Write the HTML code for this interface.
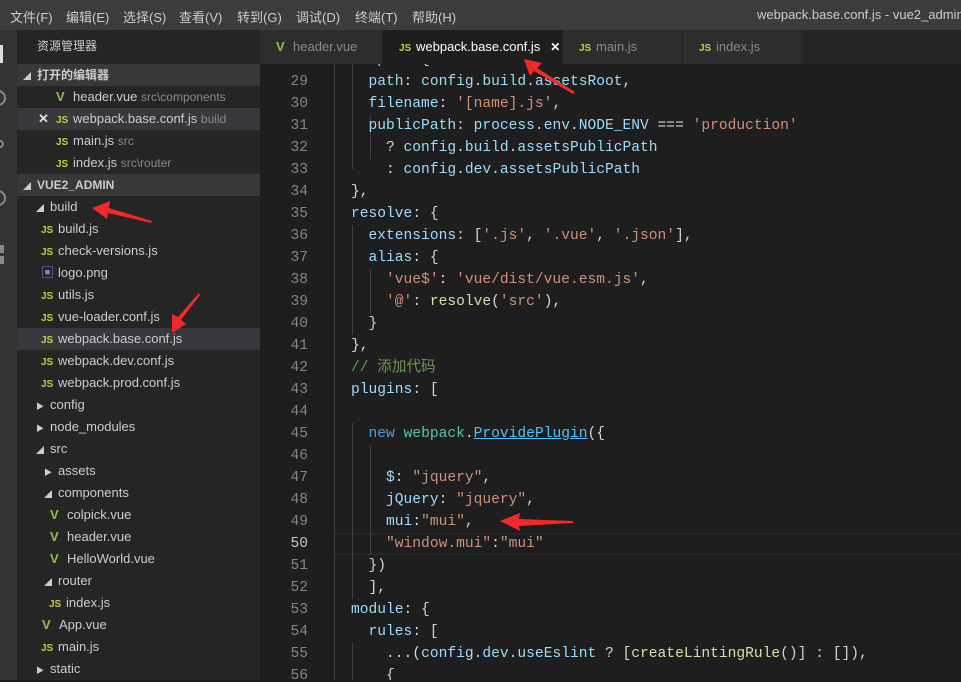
<!DOCTYPE html>
<html><head><meta charset="utf-8"><style>
*{margin:0;padding:0;box-sizing:border-box}
body{width:961px;height:680px;background:#1e1e1e;overflow:hidden;position:relative;font-family:"Liberation Sans","Noto Sans CJK SC",sans-serif;color:#ccc}
#title{position:absolute;left:0;top:0;width:961px;height:30px;background:#3c3c3c;font-size:13px;color:#ccc;overflow:hidden}
#title span{position:absolute;top:7px;white-space:nowrap}
#act{position:absolute;left:0;top:30px;width:17px;height:650px;background:#333;overflow:hidden}
#side{position:absolute;left:17px;top:30px;width:243px;height:650px;background:#252526;font-size:13px}
.row{position:absolute;left:0;width:243px;height:22px;line-height:22px;white-space:nowrap}
.sec{background:#383838;font-weight:bold;font-size:12px;color:#ccc}
.sel{background:#37373d}
.js{color:#cbcb41;font-weight:bold;font-size:10px;display:inline-block;width:17px}
.vue{color:#8dc149;display:inline-block;width:17px;font-size:13px;font-weight:bold}
.dim{color:#8a8a8a;font-size:12px}
.tri{display:inline-block;width:14px;font-size:8px;color:#ccc}
#tabs{position:absolute;left:260px;top:30px;width:701px;height:34px;background:#252526}
.tab{position:absolute;top:0;height:34px;line-height:34px;font-size:13px;color:#8a8a8a;background:#2d2d2d;border-right:1px solid #252526;padding-left:16px;white-space:nowrap}
#ed{position:absolute;left:260px;top:64px;width:701px;height:616px;overflow:hidden}
#code{position:absolute;left:0;top:-15px;width:701px;font-family:"Liberation Mono","Noto Sans CJK SC",monospace;font-size:14.6px}
.l{position:absolute;left:0;height:22px;line-height:22px;width:701px;white-space:pre;color:#d4d4d4}
.n{position:absolute;left:0;width:48px;text-align:right;color:#858585}
.c{position:absolute;left:91px}
.k{color:#9cdcfe}.s{color:#ce9178}.b{color:#569cd6}.t{color:#4ec9b0}.f{color:#dcdcaa}.g{color:#6a9955}.u{color:#4fc1ff;text-decoration:underline}
.guide{position:absolute;width:1px;background:#404040}
</style></head><body>
<div id="title">
<span style="left:10px">文件(F)</span><span style="left:66px">编辑(E)</span><span style="left:123px">选择(S)</span><span style="left:179px">查看(V)</span><span style="left:237px">转到(G)</span><span style="left:296px">调试(D)</span><span style="left:355px">终端(T)</span><span style="left:412px">帮助(H)</span>
<span style="left:757px">webpack.base.conf.js - vue2_admin - V</span>
</div>
<div id="act">
<div style="position:absolute;left:0;top:15px;width:3px;height:18px;background:#ddd"></div>
<div style="position:absolute;left:-10px;top:60px;width:16px;height:16px;border:2px solid #888;border-radius:50%"></div>
<div style="position:absolute;left:-4px;top:110px;width:8px;height:8px;border:2px solid #888;border-radius:50%"></div>
<div style="position:absolute;left:-10px;top:160px;width:16px;height:16px;border:2px solid #888;border-radius:50%"></div>
<div style="position:absolute;left:0;top:215px;width:4px;height:8px;background:#888"></div>
<div style="position:absolute;left:0;top:226px;width:4px;height:8px;background:#888"></div>
</div>
<div id="side">
<div class="row" style="top:5px;padding-left:20px;font-size:12px">资源管理器</div>
<div class="row sec" style="top:34px;padding-left:6px"><span class="tri">◢</span>打开的编辑器</div>
<div class="row" style="top:56px;padding-left:39px"><span class="vue">V</span>header.vue <span class="dim">src\components</span></div>
<div class="row sel" style="top:78px;padding-left:21px"><span style="display:inline-block;width:18px;color:#ddd;font-weight:bold">✕</span><span class="js">JS</span>webpack.base.conf.js <span class="dim">build</span></div>
<div class="row" style="top:100px;padding-left:39px"><span class="js">JS</span>main.js <span class="dim">src</span></div>
<div class="row" style="top:122px;padding-left:39px"><span class="js">JS</span>index.js <span class="dim">src\router</span></div>
<div class="row sec" style="top:144px;padding-left:6px"><span class="tri">◢</span>VUE2_ADMIN</div>
<div class="row" style="top:166px;padding-left:19px"><span class="tri">◢</span>build</div>
<div class="row" style="top:188px;padding-left:24px"><span class="js">JS</span>build.js</div>
<div class="row" style="top:210px;padding-left:24px"><span class="js">JS</span>check-versions.js</div>
<div class="row" style="top:232px;padding-left:24px"><span style="display:inline-block;width:17px;color:#a074c4">▣</span>logo.png</div>
<div class="row" style="top:254px;padding-left:24px"><span class="js">JS</span>utils.js</div>
<div class="row" style="top:276px;padding-left:24px"><span class="js">JS</span>vue-loader.conf.js</div>
<div class="row sel" style="top:298px;padding-left:24px"><span class="js">JS</span>webpack.base.conf.js</div>
<div class="row" style="top:320px;padding-left:24px"><span class="js">JS</span>webpack.dev.conf.js</div>
<div class="row" style="top:342px;padding-left:24px"><span class="js">JS</span>webpack.prod.conf.js</div>
<div class="row" style="top:364px;padding-left:19px"><span class="tri">▶</span>config</div>
<div class="row" style="top:386px;padding-left:19px"><span class="tri">▶</span>node_modules</div>
<div class="row" style="top:408px;padding-left:19px"><span class="tri">◢</span>src</div>
<div class="row" style="top:430px;padding-left:27px"><span class="tri">▶</span>assets</div>
<div class="row" style="top:452px;padding-left:27px"><span class="tri">◢</span>components</div>
<div class="row" style="top:474px;padding-left:33px"><span class="vue">V</span>colpick.vue</div>
<div class="row" style="top:496px;padding-left:33px"><span class="vue">V</span>header.vue</div>
<div class="row" style="top:518px;padding-left:33px"><span class="vue">V</span>HelloWorld.vue</div>
<div class="row" style="top:540px;padding-left:27px"><span class="tri">◢</span>router</div>
<div class="row" style="top:562px;padding-left:32px"><span class="js">JS</span>index.js</div>
<div class="row" style="top:584px;padding-left:25px"><span class="vue">V</span>App.vue</div>
<div class="row" style="top:606px;padding-left:24px"><span class="js">JS</span>main.js</div>
<div class="row" style="top:628px;padding-left:19px"><span class="tri">▶</span>static</div>
</div>
<div id="tabs">
<div class="tab" style="left:0;width:123px"><span class="vue">V</span>header.vue</div>
<div class="tab" style="left:123px;width:180px;background:#1e1e1e;color:#fff"><span class="js">JS</span>webpack.base.conf.js<span style="margin-left:10px;font-weight:bold;font-size:12px">✕</span></div>
<div class="tab" style="left:303px;width:120px"><span class="js">JS</span>main.js</div>
<div class="tab" style="left:423px;width:120px"><span class="js">JS</span>index.js</div>
</div>
<div id="ed">
<div style="position:absolute;left:75px;top:469px;width:626px;height:22px;border-top:2px solid #282828;border-bottom:2px solid #282828"></div>
<div class="guide" style="left:74px;top:0;height:616px"></div>
<div class="guide" style="left:92px;top:0;height:105px"></div>
<div class="guide" style="left:110px;top:51px;height:44px"></div>
<div class="guide" style="left:92px;top:161px;height:110px"></div>
<div class="guide" style="left:110px;top:205px;height:44px"></div>
<div class="guide" style="left:92px;top:359px;height:176px"></div>
<div class="guide" style="left:110px;top:381px;height:110px"></div>
<div class="guide" style="left:92px;top:579px;height:40px"></div>
<div id="code">
<div class="l" style="top:0"><span class="n">28</span><span class="c"><span class="k">output</span>: {</span></div>
<div class="l" style="top:22px"><span class="n">29</span><span class="c">  <span class="k">path</span>: <span class="k">config</span>.<span class="k">build</span>.<span class="k">assetsRoot</span>,</span></div>
<div class="l" style="top:44px"><span class="n">30</span><span class="c">  <span class="k">filename</span>: <span class="s">'[name].js'</span>,</span></div>
<div class="l" style="top:66px"><span class="n">31</span><span class="c">  <span class="k">publicPath</span>: <span class="k">process</span>.<span class="k">env</span>.<span class="k">NODE_ENV</span> === <span class="s">'production'</span></span></div>
<div class="l" style="top:88px"><span class="n">32</span><span class="c">    ? <span class="k">config</span>.<span class="k">build</span>.<span class="k">assetsPublicPath</span></span></div>
<div class="l" style="top:110px"><span class="n">33</span><span class="c">    : <span class="k">config</span>.<span class="k">dev</span>.<span class="k">assetsPublicPath</span></span></div>
<div class="l" style="top:132px"><span class="n">34</span><span class="c">},</span></div>
<div class="l" style="top:154px"><span class="n">35</span><span class="c"><span class="k">resolve</span>: {</span></div>
<div class="l" style="top:176px"><span class="n">36</span><span class="c">  <span class="k">extensions</span>: [<span class="s">'.js'</span>, <span class="s">'.vue'</span>, <span class="s">'.json'</span>],</span></div>
<div class="l" style="top:198px"><span class="n">37</span><span class="c">  <span class="k">alias</span>: {</span></div>
<div class="l" style="top:220px"><span class="n">38</span><span class="c">    <span class="s">'vue$'</span>: <span class="s">'vue/dist/vue.esm.js'</span>,</span></div>
<div class="l" style="top:242px"><span class="n">39</span><span class="c">    <span class="s">'@'</span>: <span class="f">resolve</span>(<span class="s">'src'</span>),</span></div>
<div class="l" style="top:264px"><span class="n">40</span><span class="c">  }</span></div>
<div class="l" style="top:286px"><span class="n">41</span><span class="c">},</span></div>
<div class="l" style="top:308px"><span class="n">42</span><span class="c"><span class="g">// 添加代码</span></span></div>
<div class="l" style="top:330px"><span class="n">43</span><span class="c"><span class="k">plugins</span>: [</span></div>
<div class="l" style="top:352px"><span class="n">44</span><span class="c"></span></div>
<div class="l" style="top:374px"><span class="n">45</span><span class="c">  <span class="b">new</span> <span class="t">webpack</span>.<span class="u">ProvidePlugin</span>({</span></div>
<div class="l" style="top:396px"><span class="n">46</span><span class="c"></span></div>
<div class="l" style="top:418px"><span class="n">47</span><span class="c">    <span class="k">$</span>: <span class="s">"jquery"</span>,</span></div>
<div class="l" style="top:440px"><span class="n">48</span><span class="c">    <span class="k">jQuery</span>: <span class="s">"jquery"</span>,</span></div>
<div class="l" style="top:462px"><span class="n">49</span><span class="c">    <span class="k">mui</span>:<span class="s">"mui"</span>,</span></div>
<div class="l" style="top:484px"><span class="n" style="color:#c6c6c6">50</span><span class="c">    <span class="s">"window.mui"</span>:<span class="s">"mui"</span></span></div>
<div class="l" style="top:506px"><span class="n">51</span><span class="c">  })</span></div>
<div class="l" style="top:528px"><span class="n">52</span><span class="c">  ],</span></div>
<div class="l" style="top:550px"><span class="n">53</span><span class="c"><span class="k">module</span>: {</span></div>
<div class="l" style="top:572px"><span class="n">54</span><span class="c">  <span class="k">rules</span>: [</span></div>
<div class="l" style="top:594px"><span class="n">55</span><span class="c">    ...(<span class="k">config</span>.<span class="k">dev</span>.<span class="k">useEslint</span> ? [<span class="f">createLintingRule</span>()] : []),</span></div>
<div class="l" style="top:616px"><span class="n">56</span><span class="c">    {</span></div>
</div>
</div>
<svg style="position:absolute;left:0;top:0" width="961" height="680">
<g fill="#f02a2a">
<polygon points="524,59 542,63 537,68 575,92 573,94 534,71 530,76"/>
<polygon points="92,208 110,201 109,208 152,221 151,223 108,213 107,219"/>
<polygon points="172,333 172,314 178,317 199,293 200,295 181,320 186,324"/>
<polygon points="500,521 520,513 519,519 573,521 573,523 519,526 520,531"/>
</g>
</svg>
</body></html>
